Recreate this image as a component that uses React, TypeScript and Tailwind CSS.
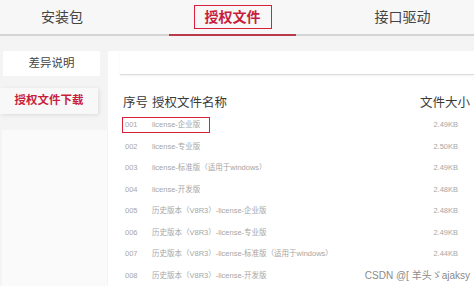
import React from "react";

const rows = [
  ["001", "license-企业版", "2.49KB"],
  ["002", "license-专业版", "2.50KB"],
  ["003", "license-标准版（适用于windows）", "2.49KB"],
  ["004", "license-开发版", "2.48KB"],
  ["005", "历史版本（V8R3）-license-企业版", "2.48KB"],
  ["006", "历史版本（V8R3）-license-专业版", "2.49KB"],
  ["007", "历史版本（V8R3）-license-标准版（适用于windows）", "2.44KB"],
  ["008", "历史版本（V8R3）-license-开发版", ""],
];

export default function App() {
  return (
    <div
      className="relative w-[474px] h-[286px] overflow-hidden bg-[#f4f4f4]"
      style={{ fontFamily: '"Liberation Sans", "Noto Sans CJK SC", sans-serif' }}
    >
      {/* top tabs */}
      <div className="flex h-[34px] items-center bg-[#f7f7f7] border-b-2 border-[#d5d5d5] box-content">
        <div className="w-[124px] text-center text-[14px] text-[#444]">安装包</div>
        <div className="relative ml-[45px] flex h-[34px] w-[127px] items-center justify-center">
          <span className="border-[1.5px] border-[#d8203a] px-[10px] py-[1px] text-[14px] font-bold leading-[20px] text-[#c81e3c]">
            授权文件
          </span>
          <div className="absolute bottom-[-2px] left-0 h-[2px] w-full bg-[#b83a4b]" />
        </div>
        <div className="ml-[43px] w-[127px] text-center text-[14px] text-[#444]">接口驱动</div>
      </div>

      {/* body */}
      <div className="flex pt-[15px] h-[250px]">
        {/* left column */}
        <div className="flex w-[107px] flex-col">
          <div className="ml-[3px] flex h-[25px] w-[97px] items-center justify-center bg-white text-[11.5px] text-[#444]">
            差异说明
          </div>
          <div className="mt-[12px] flex h-[26px] w-[98px] items-center justify-center bg-[#f8f8f8] text-[11.5px] font-bold text-[#c81e3c] shadow-[1px_1px_4px_rgba(0,0,0,0.1)]">
            授权文件下载
          </div>
          <div className="ml-[2px] mt-[16px] flex-1 bg-[#fafafa]" />
        </div>

        {/* right panel */}
        <div className="ml-[1px] flex-1 bg-white">
          <div className="ml-[12px] h-[24px] border-b border-[#dcdcdc] shadow-[0_1px_2px_rgba(0,0,0,0.06)]" />
          <div
            className="mt-[19px] flex h-[16px] items-center pl-[15px] pr-[4px] text-[12.5px] text-[#3a3a3a]"
            style={{ fontFamily: '"Noto Sans CJK SC", sans-serif' }}
          >
            <span className="w-[29px]">序号</span>
            <span>授权文件名称</span>
            <span className="ml-auto">文件大小</span>
          </div>
          <div className="mt-[4px] flex flex-col">
            {rows.map(([n, name, size], i) => (
              <div key={n} className="relative flex h-[21.5px] items-center pl-[17px] pr-[16px] text-[7.5px] text-[#a6a6a6]">
                {i === 0 && (
                  <span className="absolute left-[14px] top-[3px] h-[16px] w-[88px] border-[1.5px] border-[#d8203a]" />
                )}
                <span className="w-[27px]">{n}</span>
                <span>{name}</span>
                <span className="ml-auto">{size}</span>
              </div>
            ))}
          </div>
        </div>
      </div>

      {/* watermark */}
      <div className="absolute bottom-[3px] right-[4px] text-[10px] text-[#8a8a8a]">
        CSDN @[ 羊头ゞajaksy
      </div>
    </div>
  );
}
